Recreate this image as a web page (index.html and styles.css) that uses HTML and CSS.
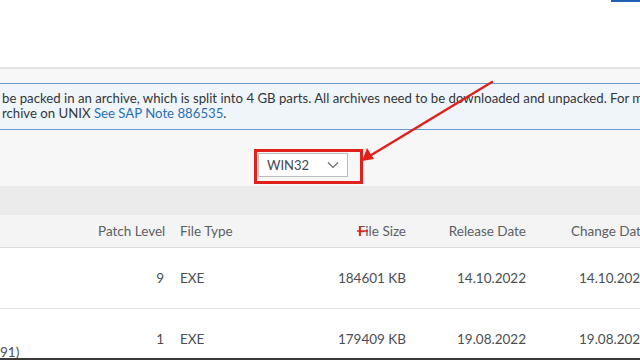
FILE: index.html
```html
<!DOCTYPE html>
<html lang="en">

<head>
    <meta charset="UTF-8">
    <title>Software Downloads</title>
    <link rel="stylesheet" href="styles.css">
</head>

<body>

    <div class="topbar">
        <div class="accent"></div>
    </div>

    <div class="page">
        <div class="notice">
            <p>be packed in an archive, which is split into 4 GB parts. All archives need to be downloaded and unpacked. For more</p>
            <p>rchive on UNIX <a href="#">See SAP Note 886535</a>.</p>
        </div>

        <div class="platform">
            <div class="select">
                <span>WIN32</span>
                <svg width="12" height="8" viewBox="0 0 12 8">
                    <path d="M1 1.5 L6 6.5 L11 1.5" fill="none" stroke="#6a6d70" stroke-width="1.2" />
                </svg>
            </div>
        </div>
    </div>

    <div class="toolbar"></div>

    <div class="table">
        <div class="row head">
            <div class="cell"></div>
            <div class="cell num">Patch Level</div>
            <div class="cell">File Type</div>
            <div class="cell num">File Size</div>
            <div class="cell num">Release Date</div>
            <div class="cell num">Change Date</div>
        </div>
        <div class="row">
            <div class="cell"></div>
            <div class="cell num">9</div>
            <div class="cell">EXE</div>
            <div class="cell num">184601 KB</div>
            <div class="cell num">14.10.2022</div>
            <div class="cell num">14.10.2022</div>
        </div>
        <div class="row">
            <div class="cell name">91)</div>
            <div class="cell num">1</div>
            <div class="cell">EXE</div>
            <div class="cell num">179409 KB</div>
            <div class="cell num">19.08.2022</div>
            <div class="cell num">19.08.2022</div>
        </div>
    </div>

    <div class="taskbar"></div>

    <!-- red annotation drawn over the screenshot -->
    <svg class="annot" width="640" height="360" viewBox="0 0 640 360">
        <rect x="255.5" y="150.5" width="106" height="32" fill="none" stroke="#e0201c" stroke-width="3" />
        <line x1="492" y1="82" x2="368" y2="157" stroke="#e0201c" stroke-width="2.5" stroke-linecap="round" />
        <path d="M362 161 L367 148 L374 159 Z" fill="#e0201c" />
        <path d="M360 226 V236 M357 231 H368" stroke="#e0201c" stroke-width="1.6" />
    </svg>

</body>

</html>
```

FILE: styles.css
```css
body {
    margin: 0;
    width: 640px;
    height: 360px;
    overflow: hidden;
    display: flex;
    flex-direction: column;
    font-family: Lato, "Liberation Sans", sans-serif;
    font-size: 13.5px;
    color: #32363a;
    background-color: #ffffff;
    position: relative;
}

/* Top shell */
.topbar {
    height: 67px;
    flex-shrink: 0;
    display: flex;
    justify-content: flex-end;
}

.accent {
    width: 29px;
    height: 2px;
    background-color: #2360b5;
}

/* Gray page area */
.page {
    flex-shrink: 0;
    background-color: #f7f7f7;
    border-top: 2px solid #e3e3e3;
    padding-top: 14px;
}

.notice {
    background-color: #f0f5fa;
    border-top: 1px solid #6b9bc8;
    border-bottom: 1px solid #6b9bc8;
    padding: 7px 0 8px 2px;
    font-size: 13.2px;
    white-space: nowrap;
    overflow: hidden;
}

.notice p {
    margin: 0;
    line-height: 15px;
}

.notice a {
    color: #2a6fb8;
    text-decoration: none;
}

.platform {
    padding: 23px 0 9px 258px;
}

.select {
    width: 90px;
    height: 24px;
    box-sizing: border-box;
    border: 1px solid #bcbcbc;
    background-color: #ffffff;
    display: flex;
    align-items: center;
    justify-content: space-between;
    padding: 0 8px 0 8px;
    font-size: 13px;
    color: #45494d;
}

/* Table toolbar */
.toolbar {
    height: 29px;
    flex-shrink: 0;
    background-color: #ebebeb;
}

/* Table */
.table {
    flex: 1;
    overflow: hidden;
}

.row {
    display: grid;
    grid-template-columns: 90px 82px 128px 114px 120px 122px;
    width: 656px;
    height: 60px;
    align-items: center;
    border-bottom: 1px solid #e2e2e2;
    color: #4a4e52;
}

.row.head {
    height: 32px;
    background-color: #f4f4f4;
    border-bottom: 1px solid #dcdcdc;
    color: #5b5f63;
}

.cell {
    padding: 0 8px;
    white-space: nowrap;
}

.cell.num {
    text-align: right;
}

.cell.name {
    padding: 26px 0 0 0;
    text-align: left;
}

.taskbar {
    height: 2px;
    flex-shrink: 0;
    background-color: #3a3a3a;
}

.annot {
    position: absolute;
    top: 0;
    left: 0;
    pointer-events: none;
}
```
